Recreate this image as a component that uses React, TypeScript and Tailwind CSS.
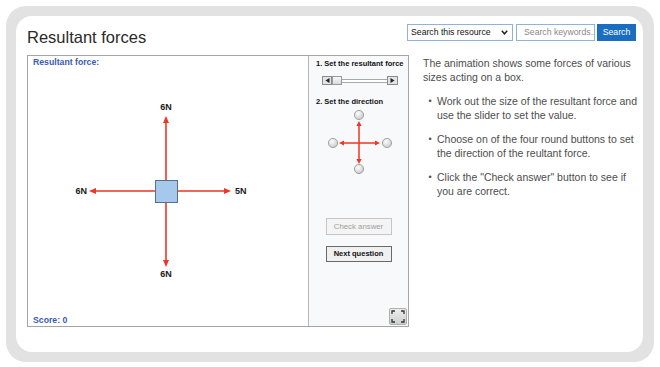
import React from "react";

const FONT = { fontFamily: '"Liberation Sans", Arial, sans-serif' };

function Arrow({ x1, y1, x2, y2, head = 7, half = 3, width = 1.6, color = "#ee3526" }: { x1: number; y1: number; x2: number; y2: number; head?: number; half?: number; width?: number; color?: string }) {
  const dx = x2 - x1;
  const dy = y2 - y1;
  const len = Math.sqrt(dx * dx + dy * dy);
  const ux = dx / len;
  const uy = dy / len;
  const bx = x2 - ux * head;
  const by = y2 - uy * head;
  const px = -uy * half;
  const py = ux * half;
  return (
    <g>
      <line x1={x1} y1={y1} x2={bx + ux * 1} y2={by + uy * 1} stroke={color} strokeWidth={width} />
      <polygon points={`${x2},${y2} ${bx + px},${by + py} ${bx - px},${by - py}`} fill={color} />
    </g>
  );
}

function Diagram() {
  return (
    <svg width={280} height={246} viewBox="28 68 280 246" className="block">
      <Arrow x1={166} y1={180} x2={166} y2={116} />
      <Arrow x1={166} y1={202} x2={166} y2={267} />
      <Arrow x1={155} y1={191} x2={89} y2={191} />
      <Arrow x1={177} y1={191} x2={231} y2={191} />
      <rect x={155.5} y={180.5} width={22} height={22} fill="#a6c8ec" stroke="#56708c" strokeWidth={1} />
      <g fontFamily='"Liberation Sans", Arial, sans-serif' fontWeight="bold" fontSize={9} fill="#1a1a1a">
        <text x={166} y={109.5} textAnchor="middle">6N</text>
        <text x={87} y={194} textAnchor="end">6N</text>
        <text x={235} y={194} textAnchor="start">5N</text>
        <text x={166} y={276.5} textAnchor="middle">6N</text>
      </g>
    </svg>
  );
}

function Direction() {
  const circles = [
    [359, 115],
    [333, 143],
    [387, 143],
    [359, 169],
  ];
  return (
    <svg width={99} height={70} viewBox="309 108 99 70" className="block">
      <defs>
        <radialGradient id="cg" cx="40%" cy="35%" r="70%">
          <stop offset="0%" stopColor="#ffffff" />
          <stop offset="100%" stopColor="#c4c4c4" />
        </radialGradient>
      </defs>
      <Arrow x1={359} y1={143} x2={359} y2={121} head={5} half={2.6} width={1.5} />
      <Arrow x1={359} y1={143} x2={359} y2={164} head={5} half={2.6} width={1.5} />
      <Arrow x1={359} y1={143} x2={339} y2={143} head={5} half={2.6} width={1.5} />
      <Arrow x1={359} y1={143} x2={380} y2={143} head={5} half={2.6} width={1.5} />
      {circles.map(([cx, cy], i) => (
        <circle key={i} cx={cx} cy={cy} r={4.6} fill="url(#cg)" stroke="#9c9c9c" strokeWidth={0.9} />
      ))}
    </svg>
  );
}

function Slider() {
  return (
    <div className="flex items-center ml-[13px] mt-[7px] h-[9px]">
      <div className="w-[10px] h-[9px] border border-[#8a8a8a] bg-[#e4e4e4] flex items-center justify-center">
        <svg width={5} height={5} viewBox="0 0 5 5"><polygon points="0.5,2.5 4.5,0 4.5,5" fill="#222" /></svg>
      </div>
      <div className="w-[10px] h-[9px] border border-[#9a9a9a] bg-gradient-to-b from-[#fafafa] to-[#d8d8d8]" />
      <div className="w-[45px] h-[4px] border-y border-[#a8a8a8] bg-white" />
      <div className="w-[11px] h-[9px] border border-[#8a8a8a] bg-[#e4e4e4] flex items-center justify-center">
        <svg width={5} height={5} viewBox="0 0 5 5"><polygon points="4.5,2.5 0.5,0 0.5,5" fill="#222" /></svg>
      </div>
    </div>
  );
}

export default function App() {
  return (
    <div className="w-[660px] h-[367px] bg-white pt-[6px] pl-[6px] pr-[6px] pb-[5px]" style={FONT}>
      <div className="w-[648px] h-[356px] rounded-[20px] bg-[#e2e2e2] pt-[10px] pl-[10px]">
        <div className="w-[627px] h-[336px] rounded-[16px] bg-white pl-[11px] pt-[8px]">
          {/* header */}
          <div className="flex justify-between h-[31px] pr-[7px]">
            <div className="text-[16.5px] leading-[20px] pt-[2.5px] text-[#2a2a2a]">Resultant forces</div>
            <div className="flex h-[17px] text-[8.7px] whitespace-nowrap">
              <div className="w-[106px] h-[17px] border border-[#8fb2dc] bg-white flex items-center justify-between pl-[3px] pr-[4px] text-[#111]">
                <span>Search this resource</span>
                <svg width={7} height={5} viewBox="0 0 7 5"><polyline points="0.8,0.8 3.5,3.8 6.2,0.8" fill="none" stroke="#222" strokeWidth={1.5} /></svg>
              </div>
              <div className="ml-[3px] w-[79px] h-[17px] border border-[#8fb2dc] bg-white flex items-center pl-[7px] text-[#8a8a8a] overflow-hidden">
                <span className="whitespace-nowrap">Search keywords..</span>
              </div>
              <div className="ml-[2px] w-[39px] h-[17px] bg-[#1b6dc1] text-white flex items-center justify-center">Search</div>
            </div>
          </div>
          {/* main */}
          <div className="flex">
            <div className="w-[382px] h-[272px] border border-[#a5a5a5] flex">
              <div className="w-[280px] h-[270px] flex flex-col bg-white">
                <div className="h-[12px] leading-[12px] pl-[5px] text-[8.7px] font-bold text-[#3a5ab2]">Resultant force:</div>
                <Diagram />
                <div className="h-[12px] leading-[12px] pl-[5px] text-[8.7px] font-bold text-[#3a5ab2]">Score: 0</div>
              </div>
              <div className="w-[100px] h-[270px] border-l border-[#b5b5b5] bg-[#f8f9fb] flex flex-col pt-[3px]">
                <div className="h-[10px] leading-[10px] pl-[7px] text-[7.5px] font-bold text-[#111] whitespace-nowrap">1. Set the resultant force</div>
                <Slider />
                <div className="mt-[12px] h-[10px] leading-[10px] pl-[7px] text-[7.5px] font-bold text-[#111] whitespace-nowrap">2. Set the direction</div>
                <div className="mt-[1px]">
                  <Direction />
                </div>
                <div className="mt-[40px] mx-auto w-[66px] h-[17px] border border-[#c6c6c6] bg-[#f4f4f4] text-[#a0a0a0] text-[7.8px] flex items-center justify-center">
                  Check answer
                </div>
                <div className="mt-[11px] mx-auto w-[66px] h-[16px] border border-[#6a6a6a] bg-[#f0f0f0] text-[#111] font-bold text-[7.5px] flex items-center justify-center">
                  Next question
                </div>
                <div className="mt-auto self-end mr-[1px] mb-[1px] w-[18px] h-[17px] rounded-[2px] border border-[#b0b0b0] bg-gradient-to-b from-[#eeeeee] to-[#cfcfcf]">
                  <svg width={16} height={15} viewBox="0 0 16 15" className="block">
                    <g fill="none" stroke="#333" strokeWidth={1.3}>
                      <polyline points="2,5 2,2 5,2" />
                      <polyline points="11,2 14,2 14,5" />
                      <polyline points="2,10 2,13 5,13" />
                      <polyline points="11,13 14,13 14,10" />
                    </g>
                  </svg>
                </div>
              </div>
            </div>
            <div className="ml-[14px] w-[214px] pt-[1px] text-[10.5px] leading-[14px] text-[#4d4d4d]">
              <p>The animation shows some forces of various sizes acting on a box.</p>
              <div className="flex mt-[10px]">
                <span className="w-[14px] shrink-0 text-center text-[9px]">•</span>
                <span>Work out the size of the resultant force and use the slider to set the value.</span>
              </div>
              <div className="flex mt-[10px]">
                <span className="w-[14px] shrink-0 text-center text-[9px]">•</span>
                <span>Choose on of the four round buttons to set the direction of the reultant force.</span>
              </div>
              <div className="flex mt-[10px]">
                <span className="w-[14px] shrink-0 text-center text-[9px]">•</span>
                <span>Click the "Check answer" button to see if you are correct.</span>
              </div>
            </div>
          </div>
        </div>
      </div>
    </div>
  );
}
